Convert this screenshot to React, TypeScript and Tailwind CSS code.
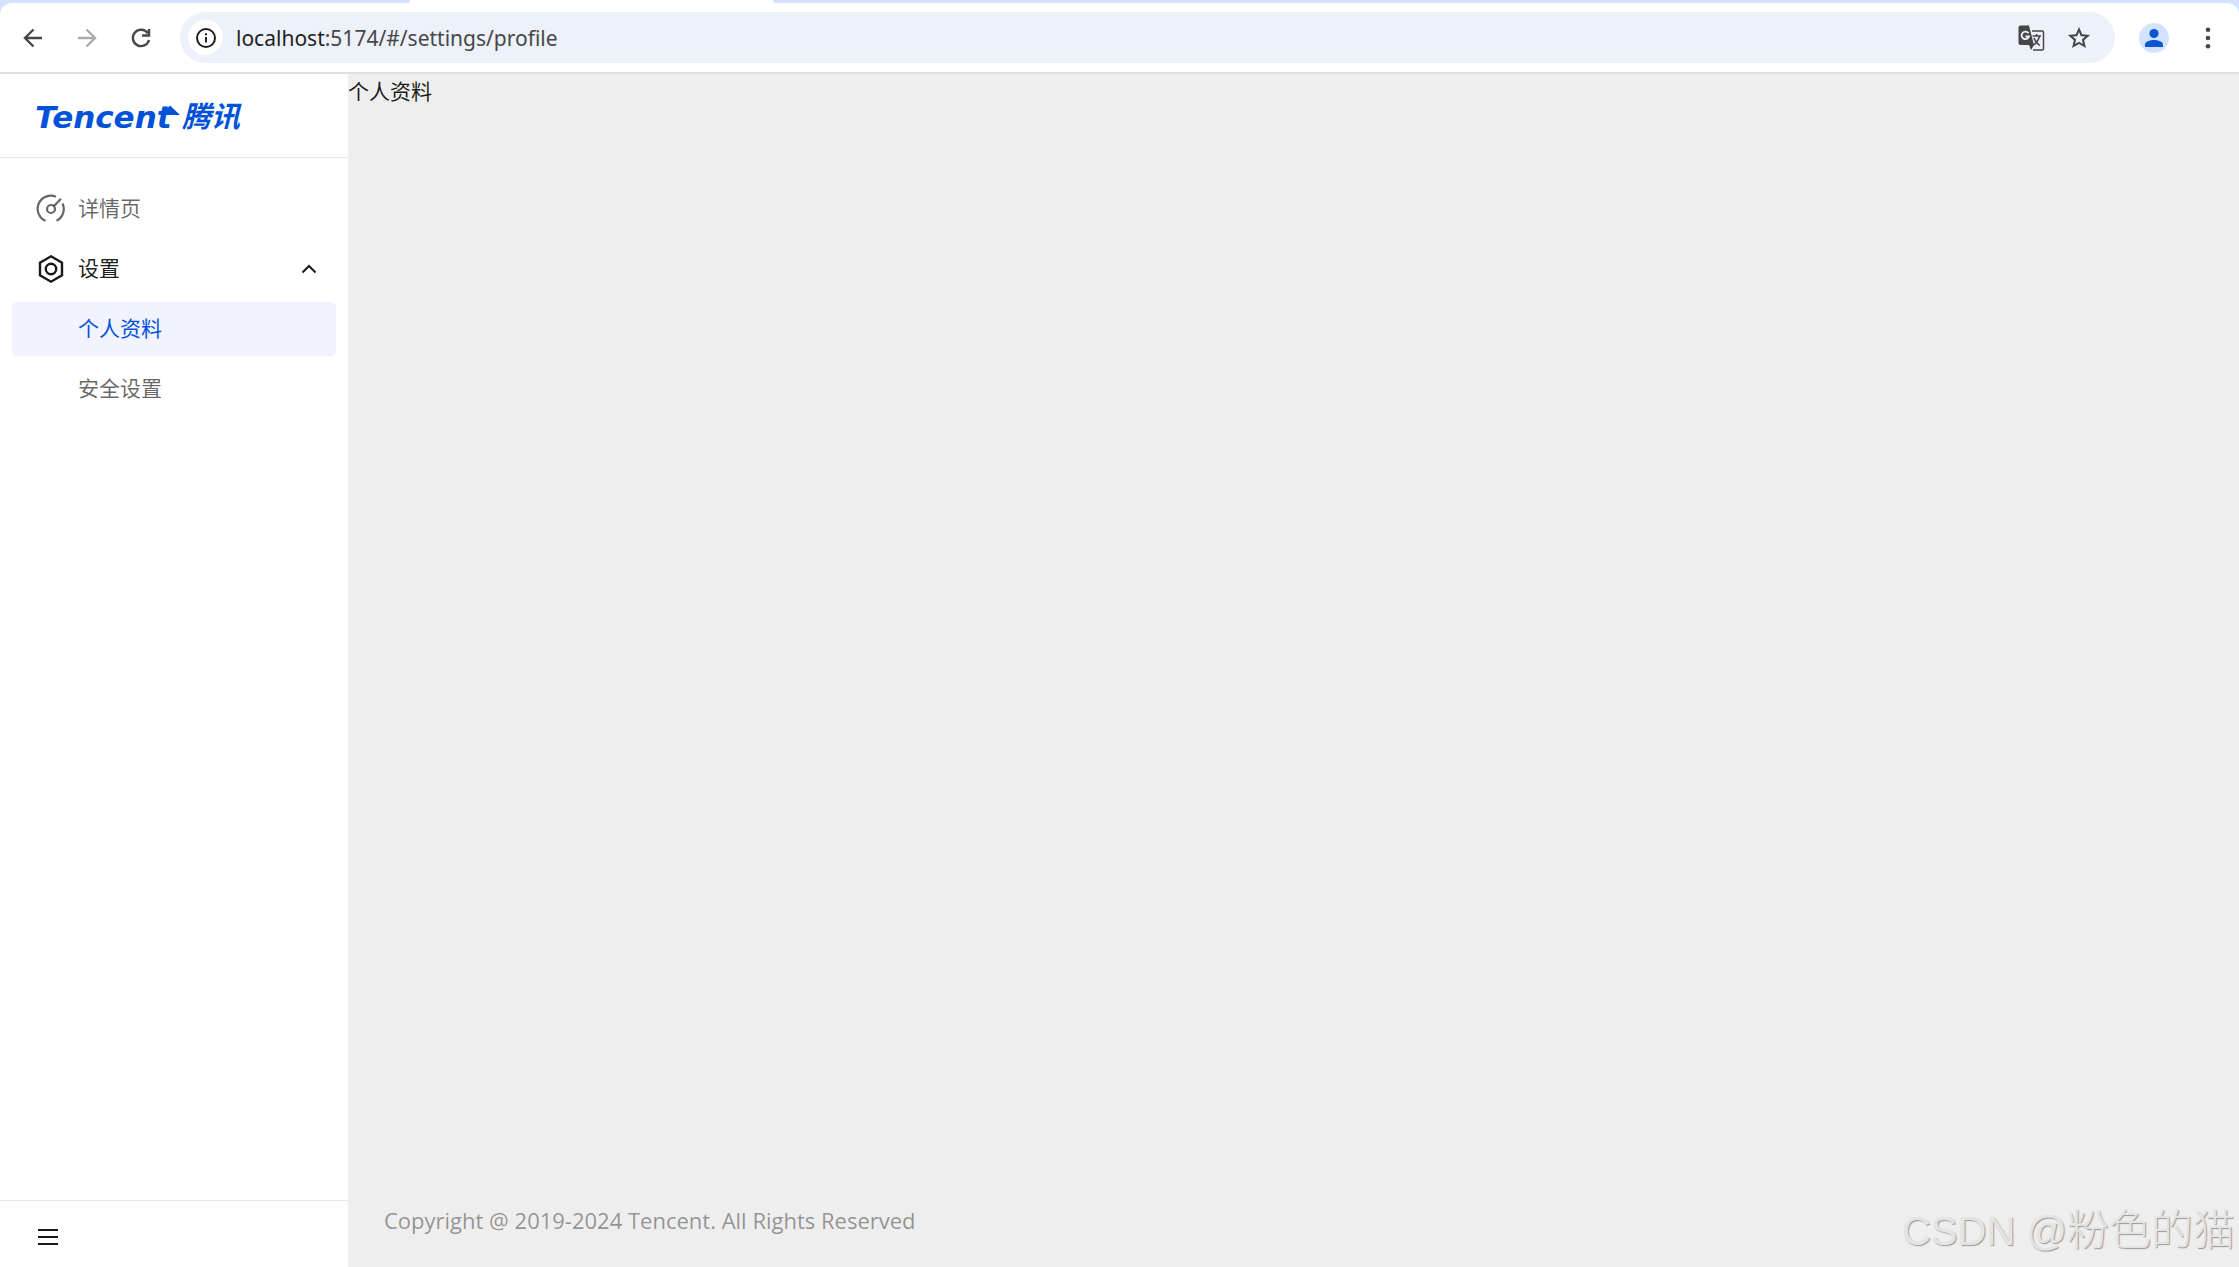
import type { ReactNode } from "react";

const FONT = "font-['Noto_Sans','Noto_Sans_CJK_SC',sans-serif]";

// Browser window with the admin app opened on the profile settings page.
export default function App() {
  return (
    <div className={`flex h-screen flex-col overflow-hidden bg-white ${FONT}`}>
      <TabStrip />
      <Toolbar />
      <div className="flex min-h-0 flex-1">
        <Sidebar />
        <main className="relative flex flex-1 flex-col bg-[#eeeeee]">
          <h1 className="pt-0.5 text-[21px] leading-[30px] text-black/90">个人资料</h1>
          <footer className="mt-auto px-9 pb-8 font-['Open_Sans',sans-serif] text-[22px] leading-[30px] text-black/40">
            Copyright @ 2019-2024 Tencent. All Rights Reserved
          </footer>
          <Watermark />
        </main>
      </div>
    </div>
  );
}

function TabStrip() {
  return (
    <div className="flex h-[3px] shrink-0 bg-white">
      <div className="w-[410px] rounded-br-[3px] bg-[#d3e3fd]" />
      <div className="w-[363px]" />
      <div className="flex-1 rounded-bl-[3px] bg-[#d3e3fd]" />
    </div>
  );
}

function Toolbar() {
  return (
    <div className="shrink-0 bg-[#d3e3fd]">
      <header className="flex h-[71px] items-center rounded-t-xl border-b-2 border-[#e0e0e0] bg-white pl-[18px] pr-4">
        <ToolButton label="Back" className="text-[#474747]">
          <svg viewBox="0 0 30 30" className="size-[30px]" fill="none" stroke="currentColor" strokeWidth="2.4">
            <path d="M24 15H8M15.500 6.500L7 15l8.500 8.500" />
          </svg>
        </ToolButton>
        <ToolButton label="Forward" className="ml-6 text-[#ababab]">
          <svg viewBox="0 0 30 30" className="size-[30px]" fill="none" stroke="currentColor" strokeWidth="2.4">
            <path d="M6 15h16M14.500 6.500L23 15l-8.500 8.500" />
          </svg>
        </ToolButton>
        <ToolButton label="Reload" className="ml-6 text-[#474747]">
          <svg viewBox="0 0 30 30" className="size-[30px]" fill="none" stroke="currentColor" strokeWidth="2.4">
            <path d="M21.800 10.200A8.200 8.200 0 1 0 23 17" />
            <path d="M23 6v6.500h-7" />
          </svg>
        </ToolButton>
        <form className="ml-6 flex h-[51px] flex-1 items-center rounded-full bg-[#ecf1fa] pl-2 pr-[21px]">
          <button
            type="button"
            aria-label="Site information"
            className="flex size-[35px] items-center justify-center rounded-full bg-white text-[#1f1f1f]"
          >
            <svg viewBox="0 0 20 20" className="size-5" fill="none" stroke="currentColor" strokeWidth="2">
              <circle cx="10" cy="10" r="9" />
              <path d="M10 9v5.500M10 5.300v2" />
            </svg>
          </button>
          <a href="#/settings/profile" className="ml-[13px] flex-1 text-[21px] leading-[30px] text-[#474747]">
            <span className="text-[#1f1f1f]">localhost</span>:5174/#/settings/profile
          </a>
          <ToolButton label="Translate" className="text-[#474747]">
            <TranslateIcon />
          </ToolButton>
          <ToolButton label="Bookmark" className="ml-[18px] text-[#474747]">
            <svg viewBox="0 0 24 24" className="size-[30px]" fill="currentColor">
              <path d="M20.900 9.600l-6.300-.540L12 3.200 9.400 9.060l-6.300.540 4.780 4.150L6.450 20 12 16.700 17.550 20l-1.430-6.250zM12 14.900l-3.100 1.870.82-3.530-2.740-2.380 3.610-.310L12 7.200l1.410 3.350 3.610.310-2.740 2.380.82 3.530z" />
            </svg>
          </ToolButton>
        </form>
        <ToolButton label="Profile" className="ml-6 rounded-full bg-[#d3e3fd] text-[#0b57d0]">
          <svg viewBox="0 0 30 30" className="size-[30px]" fill="currentColor">
            <circle cx="15" cy="10.500" r="4.600" />
            <path d="M6 24v-2.500c0-3 5-4.500 9-4.500s9 1.500 9 4.500V24z" />
          </svg>
        </ToolButton>
        <ToolButton label="Menu" className="ml-6 text-[#474747]">
          <svg viewBox="0 0 30 30" className="size-[30px]" fill="currentColor">
            <circle cx="15" cy="6.800" r="2.300" />
            <circle cx="15" cy="15" r="2.300" />
            <circle cx="15" cy="23.200" r="2.300" />
          </svg>
        </ToolButton>
      </header>
    </div>
  );
}

function ToolButton({
  label,
  className,
  children,
}: {
  label: string;
  className: string;
  children: ReactNode;
}) {
  return (
    <button type="button" aria-label={label} className={className}>
      {children}
    </button>
  );
}

function TranslateIcon() {
  return (
    <svg viewBox="0 0 30 30" className="size-[30px]" fill="none">
      <path d="M16 8h10a1.500 1.500 0 0 1 1.500 1.500v16A1.500 1.500 0 0 1 26 27H17" stroke="currentColor" strokeWidth="1.500" />
      <path d="M4.500 2.500h8.500l5 19.500H4.500A2 2 0 0 1 2.500 20V4.500a2 2 0 0 1 2-2z" fill="currentColor" />
      <path d="M13 22h5l-3 5z" fill="currentColor" />
      <path d="M12.500 10.200A3.800 3.800 0 1 0 13 13.500H9.500" stroke="#ecf1fa" strokeWidth="1.800" />
      <path d="M16.500 13h8.500M20.500 11v2M23.500 13c-.8 4-3 7-6 9M18 15c1 3 3 5.500 6 7.500" stroke="currentColor" strokeWidth="1.500" />
    </svg>
  );
}

function Sidebar() {
  return (
    <aside className="flex w-[348px] shrink-0 flex-col bg-white">
      <a href="#/" aria-label="Tencent 腾讯" className="flex h-[84px] items-center border-b border-[#e7e7e7] px-9">
        <Logo />
      </a>
      <nav className="flex flex-1 flex-col gap-1.5 px-3 py-6">
        <MenuItem href="#/detail" icon={<DashboardIcon />} label="详情页" />
        <button
          type="button"
          aria-expanded="true"
          className="flex h-[54px] items-center rounded-[5px] px-6 text-[21px] text-black/90"
        >
          <NutIcon />
          <span className="ml-3">设置</span>
          <svg viewBox="0 0 24 24" className="-mr-2 ml-auto size-6" fill="none" stroke="currentColor" strokeWidth="2">
            <path d="M6.500 15.500L13 9l6.500 6.500" />
          </svg>
        </button>
        <MenuItem href="#/settings/profile" label="个人资料" active />
        <MenuItem href="#/settings/security" label="安全设置" />
      </nav>
      <div className="flex h-[67px] items-center border-t border-[#e7e7e7] px-8">
        <button type="button" aria-label="Collapse menu" className="text-[#181818]">
          <svg viewBox="0 0 32 32" className="size-8" fill="currentColor">
            <path d="M6 11h20v2H6zM6 18h20v2H6zM6 25h20v2H6z" />
          </svg>
        </button>
      </div>
    </aside>
  );
}

function MenuItem({
  href,
  label,
  icon,
  active,
}: {
  href: string;
  label: string;
  icon?: ReactNode;
  active?: boolean;
}) {
  return (
    <a
      href={href}
      className={`flex h-[54px] items-center rounded-[5px] px-6 text-[21px] ${
        active ? "bg-[#f2f3ff] text-[#0052d9]" : "text-black/60"
      }`}
    >
      {icon ?? <span className="w-[30px]" />}
      <span className="ml-3">{label}</span>
    </a>
  );
}

function DashboardIcon() {
  return (
    <svg viewBox="0 0 30 30" className="size-[30px]" fill="none" stroke="currentColor" strokeWidth="2.200">
      <circle cx="15" cy="15" r="4" />
      <path d="M18 12l7-7.200" />
      <path d="M20 2.800A13 13 0 0 0 9.500 26.800M26.500 9.500A13 13 0 0 1 20.500 26.800" />
    </svg>
  );
}

function NutIcon() {
  return (
    <svg viewBox="0 0 30 30" className="size-[30px]" fill="none" stroke="currentColor" strokeWidth="2.400">
      <path d="M15 2.300l11 6.300v12.800l-11 6.300-11-6.300V8.600z" />
      <circle cx="15" cy="15" r="5.200" />
    </svg>
  );
}

function Logo() {
  return (
    <svg viewBox="0 0 206 36" className="h-9 w-[206px] overflow-visible" fill="#0052d9">
      <text x="-1" y="30" fontSize="31" fontWeight="700" fontStyle="italic" fontFamily="DejaVu Sans, sans-serif">
        Tencent
      </text>
      <path d="M125 17l9-9.500 10 9.500z" />
      <text x="146" y="29" fontSize="29" fontWeight="700" fontStyle="italic">
        腾讯
      </text>
    </svg>
  );
}

function Watermark() {
  return (
    <p className="absolute bottom-2.5 right-1 whitespace-nowrap font-['Liberation_Sans','Noto_Sans_CJK_SC',sans-serif] text-[42px] leading-[52px] font-light text-[#e4e4e4] [text-shadow:1px_1px_1px_#999999]">
      <span className="text-[40px]">CSDN @</span>粉色的猫
    </p>
  );
}
